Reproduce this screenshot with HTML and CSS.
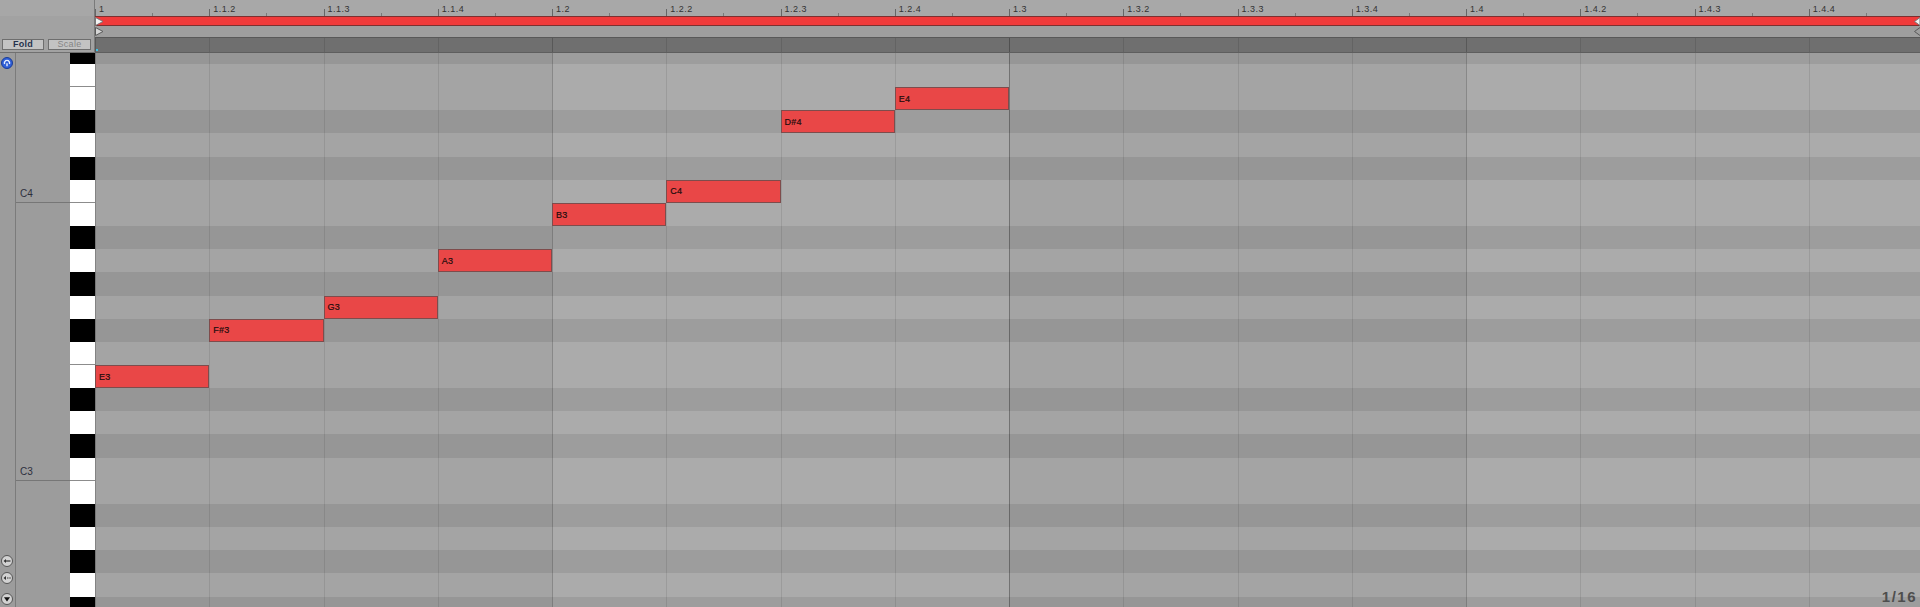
FILE: index.html
```html
<!DOCTYPE html>
<html>
<head>
<meta charset="utf-8">
<link rel="stylesheet" href="styles.css">
</head>
<body>
<div class="app">
  <div class="header">
    <div class="header-left">
      <div class="hl-top"></div>
      <div class="hl-buttons">
        <div class="btn fold">Fold</div>
        <div class="btn scale">Scale</div>
      </div>
    </div>
    <div class="header-right">
      <div class="ruler">
        <div class="rcell"><span>1</span></div>
        <div class="rcell"><span>1.1.2</span></div>
        <div class="rcell"><span>1.1.3</span></div>
        <div class="rcell"><span>1.1.4</span></div>
        <div class="rcell"><span>1.2</span></div>
        <div class="rcell"><span>1.2.2</span></div>
        <div class="rcell"><span>1.2.3</span></div>
        <div class="rcell"><span>1.2.4</span></div>
        <div class="rcell"><span>1.3</span></div>
        <div class="rcell"><span>1.3.2</span></div>
        <div class="rcell"><span>1.3.3</span></div>
        <div class="rcell"><span>1.3.4</span></div>
        <div class="rcell"><span>1.4</span></div>
        <div class="rcell"><span>1.4.2</span></div>
        <div class="rcell"><span>1.4.3</span></div>
        <div class="rcell"><span>1.4.4</span></div>
      </div>
      <div class="loop">
        <svg class="mk mk-l" width="9" height="9" viewBox="0 0 9 9"><path d="M0.5 0.5 L8 4.5 L0.5 8.5 Z" fill="#f4f4f4" stroke="#777" stroke-width="1"/></svg>
        <svg class="mk mk-r" width="6" height="9" viewBox="0 0 6 9"><path d="M6 0.5 L0.5 4.5 L6 8.5 Z" fill="#f4f4f4" stroke="#777" stroke-width="1"/></svg>
      </div>
      <div class="start">
        <svg class="mk mk-l" width="9" height="9" viewBox="0 0 9 9"><path d="M0.5 0.5 L8 4.5 L0.5 8.5 Z" fill="#d6d6d6" stroke="#5a5a5a" stroke-width="1"/></svg>
        <svg class="mk mk-r" width="6" height="9" viewBox="0 0 6 9"><path d="M6 0.5 L0.5 4.5 L6 8.5" fill="none" stroke="#5a5a5a" stroke-width="1"/></svg>
      </div>
      <div class="darkbar">
        <div class="dcols">
          <div class="dc beat"></div><div class="dc"></div><div class="dc"></div><div class="dc"></div>
          <div class="dc beat"></div><div class="dc"></div><div class="dc"></div><div class="dc"></div>
          <div class="dc beat half"></div><div class="dc"></div><div class="dc"></div><div class="dc"></div>
          <div class="dc beat"></div><div class="dc"></div><div class="dc"></div><div class="dc"></div>
        </div>
        <span class="cyan"></span>
      </div>
    </div>
  </div>

  <div class="body">
    <div class="side">
      <svg class="ico" width="12" height="12" viewBox="0 0 12 12">
        <circle cx="6" cy="6" r="5.5" fill="#2f5fd8" stroke="#1b3c96" stroke-width="1"/>
        <path d="M3.6 7 A2.6 2.6 0 1 1 8.4 7" fill="none" stroke="#e8f0ff" stroke-width="1.4"/>
        <path d="M6 6.2 L6 9.2" stroke="#e8f0ff" stroke-width="1.4"/>
      </svg>
      <div class="side-bottom">
        <svg class="ico" width="12" height="12" viewBox="0 0 12 12">
          <circle cx="6" cy="6" r="5.5" fill="#d2d2d2" stroke="#555" stroke-width="1"/>
          <path d="M2.5 6 L5 4 L5 8 Z" fill="#333"/>
          <path d="M5 6 L9.5 6" stroke="#333" stroke-width="1.2"/>
        </svg>
        <svg class="ico" width="12" height="12" viewBox="0 0 12 12">
          <circle cx="6" cy="6" r="5.5" fill="#d2d2d2" stroke="#555" stroke-width="1"/>
          <path d="M2.5 6 L5 4 L5 8 Z" fill="#333"/>
          <rect x="6.2" y="5.4" width="1.2" height="1.2" fill="#333"/>
          <rect x="8.4" y="5.4" width="1.2" height="1.2" fill="#333"/>
        </svg>
        <svg class="ico" width="12" height="12" viewBox="0 0 12 12">
          <circle cx="6" cy="6" r="5.5" fill="#d2d2d2" stroke="#555" stroke-width="1"/>
          <path d="M3 4.2 L9 4.2 L6 8.6 Z" fill="#111"/>
        </svg>
      </div>
    </div>

    <div class="labels">
      <div class="stack">
        <div class="lr"></div><div class="lr"></div><div class="lr"></div><div class="lr"></div><div class="lr"></div><div class="lr"></div>
        <div class="lr c">C4</div>
        <div class="lr"></div><div class="lr"></div><div class="lr"></div><div class="lr"></div><div class="lr"></div>
        <div class="lr"></div><div class="lr"></div><div class="lr"></div><div class="lr"></div><div class="lr"></div><div class="lr"></div>
        <div class="lr c">C3</div>
        <div class="lr"></div><div class="lr"></div><div class="lr"></div><div class="lr"></div><div class="lr"></div><div class="lr"></div>
      </div>
    </div>

    <div class="keys">
      <div class="stack">
        <div class="k b"></div>
        <div class="k w sep"></div>
        <div class="k w"></div>
        <div class="k b"></div>
        <div class="k w"></div>
        <div class="k b"></div>
        <div class="k w sep"></div>
        <div class="k w"></div>
        <div class="k b"></div>
        <div class="k w"></div>
        <div class="k b"></div>
        <div class="k w"></div>
        <div class="k b"></div>
        <div class="k w sep"></div>
        <div class="k w"></div>
        <div class="k b"></div>
        <div class="k w"></div>
        <div class="k b"></div>
        <div class="k w sep"></div>
        <div class="k w"></div>
        <div class="k b"></div>
        <div class="k w"></div>
        <div class="k b"></div>
        <div class="k w"></div>
        <div class="k b"></div>
      </div>
    </div>

    <div class="grid">
      <div class="stack">
        <div class="g b"></div>
        <div class="g w"></div>
        <div class="g w"></div>
        <div class="g b"></div>
        <div class="g w"></div>
        <div class="g b"></div>
        <div class="g w"></div>
        <div class="g w"></div>
        <div class="g b"></div>
        <div class="g w"></div>
        <div class="g b"></div>
        <div class="g w"></div>
        <div class="g b"></div>
        <div class="g w"></div>
        <div class="g w"></div>
        <div class="g b"></div>
        <div class="g w"></div>
        <div class="g b"></div>
        <div class="g w"></div>
        <div class="g w"></div>
        <div class="g b"></div>
        <div class="g w"></div>
        <div class="g b"></div>
        <div class="g w"></div>
        <div class="g b"></div>
      </div>
      <div class="cols">
        <div class="col beat dk"></div><div class="col dk"></div><div class="col dk"></div><div class="col dk"></div>
        <div class="col beat"></div><div class="col"></div><div class="col"></div><div class="col"></div>
        <div class="col beat half dk"></div><div class="col dk"></div><div class="col dk"></div><div class="col dk"></div>
        <div class="col beat"></div><div class="col"></div><div class="col"></div><div class="col"></div>
      </div>
      <div class="notes">
        <div class="note" style="left:0px;top:324.38px">E3</div>
        <div class="note" style="left:114.25px;top:278.04px">F#3</div>
        <div class="note" style="left:228.5px;top:254.87px">G3</div>
        <div class="note" style="left:342.75px;top:208.53px">A3</div>
        <div class="note" style="left:457px;top:162.19px">B3</div>
        <div class="note" style="left:571.25px;top:139.02px">C4</div>
        <div class="note" style="left:685.5px;top:69.51px">D#4</div>
        <div class="note" style="left:799.75px;top:46.34px">E4</div>
      </div>
      <div class="quant">1/16</div>
    </div>
  </div>
</div>
</body>
</html>
```

FILE: styles.css
```css
* {
  box-sizing: border-box;
  margin: 0;
  padding: 0;
}

html, body {
  width: 1920px;
  height: 607px;
  overflow: hidden;
  background: #a3a3a3;
  font-family: "Liberation Sans", Arial, sans-serif;
}

.app {
  display: flex;
  flex-direction: column;
  width: 1920px;
  height: 607px;
  overflow: hidden;
}

/* ---------- header ---------- */
.header {
  display: flex;
  height: 53px;
  flex: none;
}

.header-left {
  width: 95px;
  flex: none;
  display: flex;
  flex-direction: column;
  background: #a2a2a2;
  border-bottom: 1px solid #707070;
}

.hl-top {
  height: 37px;
  border-top: 16px solid #a7a7a7;
}

.hl-buttons {
  display: flex;
  gap: 4px;
  padding: 2px 0 0 2px;
}

.btn {
  height: 11px;
  border: 1px solid #6e6e6e;
  background: #c3c3c3;
  font-size: 9px;
  line-height: 9px;
  text-align: center;
  letter-spacing: 0.3px;
}

.fold {
  width: 42px;
  color: #26324c;
  font-weight: bold;
}

.scale {
  width: 43px;
  color: #858585;
}

.header-right {
  flex: 1;
  display: flex;
  flex-direction: column;
  overflow: hidden;
  border-left: 1px solid #7a7a7a;
  margin-left: -1px;
}

.ruler {
  height: 16px;
  width: 1828px;
  display: flex;
  background: #a8a8a8;
}

.rcell {
  flex: 1;
  position: relative;
  padding: 4px 0 0 4px;
  font-size: 9px;
  line-height: 10px;
  letter-spacing: 0.5px;
  color: #333;
}

.rcell::before {
  content: "";
  position: absolute;
  left: 0;
  bottom: 0;
  width: 1px;
  height: 7px;
  background: #666;
}

.rcell::after {
  content: "";
  position: absolute;
  left: 50%;
  bottom: 0;
  width: 1px;
  height: 3px;
  background: #7a7a7a;
}

.loop {
  height: 10px;
  position: relative;
  background: #f03a3a;
  border-top: 1px solid #7c3030;
  border-bottom: 1px solid #7c3030;
}

.start {
  height: 11px;
  position: relative;
  background: #9e9e9e;
}

.mk {
  position: absolute;
  top: 0;
}

.start .mk {
  top: 1px;
}

.mk-l {
  left: 0;
}

.mk-r {
  right: 0;
}

.darkbar {
  height: 16px;
  position: relative;
  background: #6f6f6f;
  border-top: 1px solid #585858;
  border-bottom: 1px solid #5e5e5e;
  overflow: hidden;
}

.dcols {
  display: flex;
  width: 1828px;
  height: 100%;
}

.dc {
  flex: 1;
  border-left: 1px solid rgba(0, 0, 0, 0.1);
}

.dc.beat {
  border-left-color: rgba(0, 0, 0, 0.2);
}

.dc.half {
  border-left-color: rgba(0, 0, 0, 0.28);
}

.cyan {
  position: absolute;
  left: 1px;
  bottom: 1px;
  width: 2px;
  height: 2px;
  background: #3fc3e6;
}

/* ---------- body ---------- */
.body {
  flex: 1;
  display: flex;
  overflow: hidden;
}

.side {
  width: 16px;
  flex: none;
  background: #9c9c9c;
  border-right: 1px solid #7b7b7b;
  display: flex;
  flex-direction: column;
  justify-content: space-between;
  align-items: center;
  padding: 4px 1px 2px 0;
}

.side-bottom {
  display: flex;
  flex-direction: column;
  gap: 5px;
}

.side-bottom .ico:last-child {
  margin-top: 4px;
}

.ico {
  display: block;
}

.labels {
  width: 54px;
  flex: none;
  background: #9c9c9c;
  overflow: hidden;
}

.keys {
  width: 25px;
  flex: none;
  overflow: hidden;
}

.grid {
  flex: 1;
  position: relative;
  overflow: hidden;
}

.stack {
  margin-top: -12.2px;
  display: flex;
  flex-direction: column;
}

.lr, .k, .g {
  height: 23.17px;
  flex: none;
}

.lr.c {
  border-bottom: 1px solid #767676;
  display: flex;
  align-items: flex-end;
  padding: 0 0 3px 4px;
  font-size: 10px;
  line-height: 10px;
  color: #2c2f3c;
}

.k.w {
  background: #ffffff;
}

.k.b {
  background: #000000;
}

.k.sep {
  border-bottom: 1px solid #8c8c8c;
}

.g.w {
  background: #ababab;
}

.g.b {
  background: #9d9d9d;
}

.cols {
  position: absolute;
  top: 0;
  left: 0;
  width: 1828px;
  height: 100%;
  display: flex;
}

.col {
  flex: 1;
  border-left: 1px solid rgba(0, 0, 0, 0.09);
}

.col.dk {
  background: rgba(0, 0, 0, 0.04);
}

.col.beat {
  border-left-color: rgba(0, 0, 0, 0.2);
}

.col.half {
  border-left-color: rgba(0, 0, 0, 0.3);
}

.notes {
  position: absolute;
  top: -12.2px;
  left: 0;
}

.note {
  position: absolute;
  width: 114.25px;
  height: 23.17px;
  background: #e94747;
  border: 1px solid #7e4c4c;
  display: flex;
  align-items: center;
  padding-left: 3px;
  font-size: 9px;
  letter-spacing: 0.3px;
  color: #1c0c0c;
  -webkit-text-stroke: 0.2px #1c0c0c;
}

.quant {
  position: absolute;
  right: 3px;
  bottom: 2px;
  font-size: 15px;
  font-weight: bold;
  letter-spacing: 1.5px;
  color: #4e4e4e;
}
```
